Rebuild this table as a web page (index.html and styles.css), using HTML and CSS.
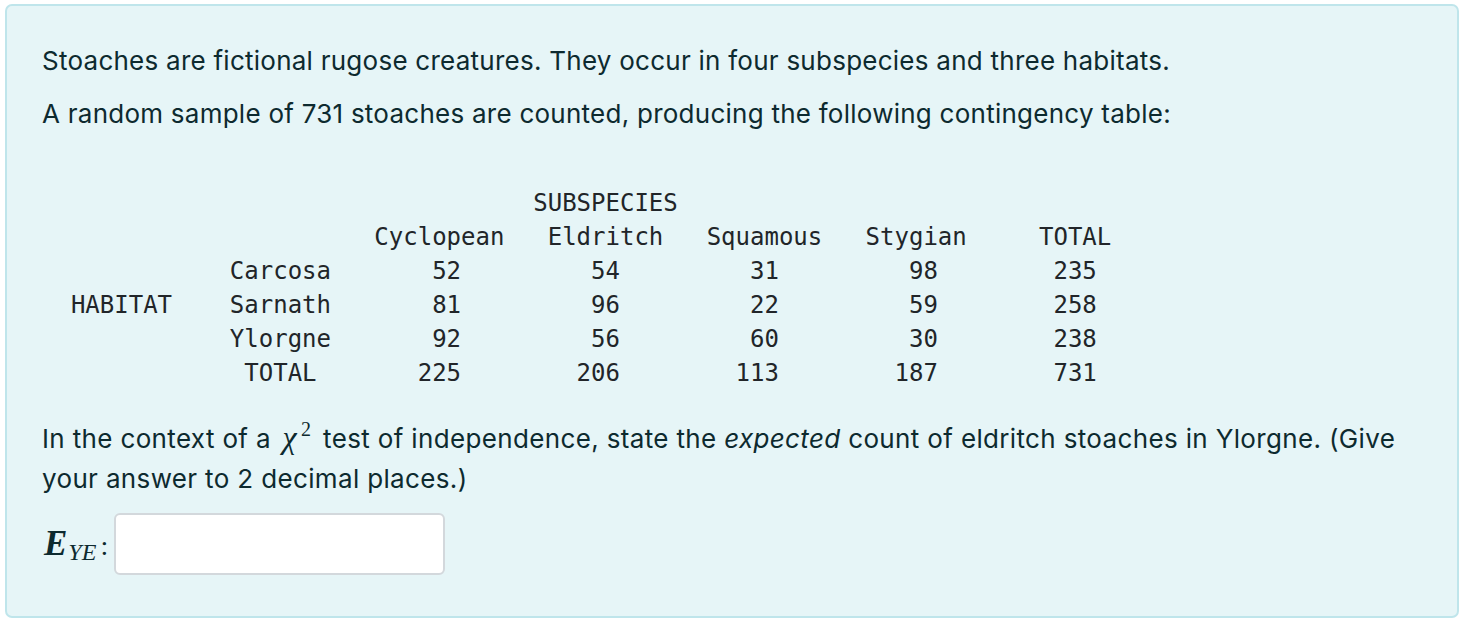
FILE: index.html
```html
<!DOCTYPE html>
<html lang="en">
<head>
<meta charset="utf-8">
<title>Stoaches</title>
<link rel="stylesheet" href="styles.css">
</head>
<body>
<div class="question">
  <p class="intro">Stoaches are fictional rugose creatures. They occur in four subspecies and three habitats.</p>
  <p class="intro">A random sample of 731 stoaches are counted, producing the following contingency table:</p>
<pre class="ctable">                                  SUBSPECIES
                       Cyclopean   Eldritch   Squamous   Stygian     TOTAL
             Carcosa       52         54         31         98        235
  HABITAT    Sarnath       81         96         22         59        258
             Ylorgne       92         56         60         30        238
              TOTAL       225        206        113        187        731</pre>
  <p class="prompt">In the context of a <span class="math"><i class="chi">χ</i><sup>2</sup></span> test of independence, state the <em>expected</em> count of eldritch stoaches in Ylorgne. (Give your answer to 2 decimal places.)</p>
  <div class="answer">
    <label class="var" for="ans"><i class="big-e">E</i><i class="sub">YE</i><span class="colon">:</span></label>
    <input id="ans" class="field" type="text">
  </div>
</div>
</body>
</html>
```
FILE: styles.css
```css
html, body {
  margin: 0;
  padding: 0;
  background: #ffffff;
}
body {
  padding: 4px 5px 0 5px;
}
.question {
  box-sizing: border-box;
  width: 1454px;
  height: 614px;
  background: #e6f5f7;
  border: 2px solid #bfe5eb;
  border-radius: 7px;
  padding: 37px 35px 0 35px;
  color: #0d2a2f;
  font-family: Inter, "Noto Sans", sans-serif;
  font-size: 26px;
  letter-spacing: 0.25px;
}
.intro {
  margin: 0 0 17px 0;
  line-height: 36px;
}
.ctable {
  margin: 54px 0 0 0;
  font-family: "DejaVu Sans Mono", monospace;
  font-size: 24px;
  line-height: 34px;
  letter-spacing: 0;
  color: #212529;
}
.prompt {
  margin: 27px 0 0 0;
  line-height: 40px;
  letter-spacing: 0.35px;
}
.math {
  font-family: "Liberation Serif", serif;
  font-size: 32px;
  margin-left: 4px;
  margin-right: 4px;
}
.chi {
  font-style: italic;
}
.math sup {
  font-size: 20px;
  font-style: normal;
  vertical-align: 12px;
  line-height: 0;
  margin-left: 4px;
}
.prompt em {
  font-style: italic;
}
.answer {
  display: flex;
  align-items: center;
  margin-top: 14px;
}
.var {
  font-family: "Liberation Serif", serif;
  display: flex;
  align-items: baseline;
  color: #0d2a2f;
  letter-spacing: 0;
  padding-left: 2px;
}
.big-e {
  font-size: 35px;
  font-style: italic;
  font-weight: bold;
}
.sub {
  font-size: 24px;
  font-style: italic;
  position: relative;
  top: 5px;
  margin-left: 1px;
}
.colon {
  font-size: 28px;
  margin-left: 4px;
}
.field {
  box-sizing: border-box;
  width: 331px;
  height: 62px;
  margin-left: 6px;
  background: #ffffff;
  border: 2px solid #d3d8dc;
  border-radius: 6px;
  font-size: 24px;
  padding: 0 12px;
}
```
